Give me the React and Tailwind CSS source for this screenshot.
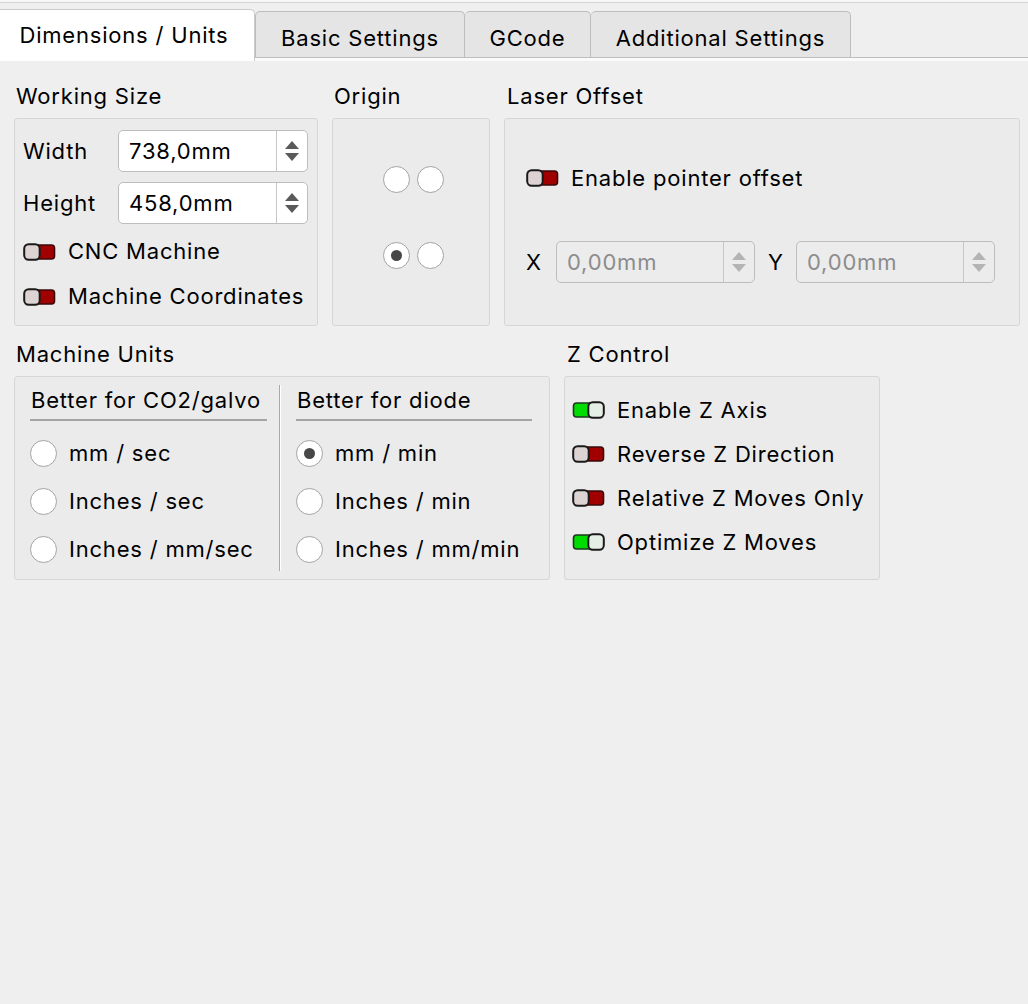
import React from "react";

function Toggle({ on }) {
  if (on) {
    return (
      <svg width="33" height="18" viewBox="0 0 33 18" className="shrink-0">
        <rect x="1.5" y="2" width="20" height="14" rx="3" fill="#00dc00" stroke="#1d3a1d" strokeWidth="1.6" />
        <rect x="16.3" y="1.2" width="15.5" height="15.6" rx="4.5" fill="#e6efe6" stroke="#1a1a1a" strokeWidth="2" />
      </svg>
    );
  }
  return (
    <svg width="33" height="18" viewBox="0 0 33 18" className="shrink-0">
      <rect x="11.5" y="2" width="20" height="14" rx="3" fill="#a00000" stroke="#3a0a0a" strokeWidth="1.6" />
      <rect x="1.2" y="1.2" width="15.5" height="15.6" rx="4.5" fill="#ddd3d3" stroke="#1a1a1a" strokeWidth="2" />
    </svg>
  );
}

function Radio({ checked }) {
  return (
    <div className="w-[27px] h-[27px] rounded-full bg-white border-[1.5px] border-[#a3a3a3] flex items-center justify-center shrink-0">
      {checked && <div className="w-[11px] h-[11px] rounded-full bg-[#474747]" />}
    </div>
  );
}

function Spin({ value, disabled, w }) {
  const arrow = disabled ? "#b4b4b4" : "#5a5a5a";
  return (
    <div
      className={
        "flex h-[42px] rounded-[5px] border border-[#bdbdbd] overflow-hidden shrink-0 " +
        (disabled ? "bg-[#ececec]" : "bg-white")
      }
      style={{ width: w }}
    >
      <div
        className={
          "flex-1 flex items-center pl-[10px] " +
          (disabled ? "text-[#8c8c8c]" : "text-black")
        }
      >
        {value}
      </div>
      <div className="w-[31px] border-l border-[#c6c6c6] flex flex-col items-center justify-center gap-[4px]">
        <svg width="14" height="8" viewBox="0 0 14 8">
          <polygon points="7,0 14,8 0,8" fill={arrow} />
        </svg>
        <svg width="14" height="8" viewBox="0 0 14 8">
          <polygon points="0,0 14,0 7,8" fill={arrow} />
        </svg>
      </div>
    </div>
  );
}

function Box({ children, className }) {
  return (
    <div className={"bg-[#ebebeb] border border-[#d6d6d6] rounded-[3px] " + className}>
      {children}
    </div>
  );
}

function Title({ children, className }) {
  return <div className={"h-[28px] leading-[28px] " + (className || "")}>{children}</div>;
}

function RadioRow({ checked, children }) {
  return (
    <div className="flex items-center gap-[12px] h-[27px] leading-[27px]">
      <Radio checked={checked} />
      <span>{children}</span>
    </div>
  );
}

function ToggleRow({ on, children, h }) {
  return (
    <div className={"flex items-center gap-[12px] " + h}>
      <Toggle on={on} />
      <span>{children}</span>
    </div>
  );
}

export default function App() {
  return (
    <div className="w-[1028px] h-[1004px] bg-[#efefef] overflow-hidden text-[22px] tracking-[0.8px] text-black font-['Inter','Liberation_Sans',sans-serif]">
      <div className="h-[2px] bg-[#f7f7f7]" />
      <div className="h-px bg-[#d2d2d2]" />
      {/* Tabs */}
      <div className="flex items-end h-[55px] border-b border-[#bdbdbd]">
        <div className="relative z-10 w-[255px] h-[52px] mb-[-4px] bg-white border-t border-r border-[#cbcbcb] rounded-tr-[5px] flex items-start justify-center pt-[9px] pr-[6px]">
          Dimensions / Units
        </div>
        <div className="w-[210px] h-[46px] bg-[#e5e5e5] border border-b-0 border-[#bdbdbd] rounded-t-[5px] flex items-center justify-center pt-[7px]">
          Basic Settings
        </div>
        <div className="w-[126px] h-[46px] bg-[#e5e5e5] border border-b-0 border-l-0 border-[#bdbdbd] rounded-t-[5px] flex items-center justify-center pt-[7px]">
          GCode
        </div>
        <div className="w-[260px] h-[46px] bg-[#e5e5e5] border border-b-0 border-l-0 border-[#bdbdbd] rounded-t-[5px] flex items-center justify-center pt-[7px]">
          Additional Settings
        </div>
      </div>
      <div className="h-[3px] bg-[#fafafa]" />

      <div className="pl-[14px] pr-[8px] pt-[21px]">
        {/* Row 1 */}
        <div className="flex gap-[14px]">
          <div className="w-[304px] shrink-0">
            <Title className="pl-[2px]">Working Size</Title>
            <Box className="mt-[8px] h-[208px] pt-[11px] pl-[8px]">
              <div className="flex items-center h-[42px]">
                <div className="w-[95px]">Width</div>
                <Spin value="738,0mm" w={190} />
              </div>
              <div className="flex items-center h-[42px] mt-[10px]">
                <div className="w-[95px]">Height</div>
                <Spin value="458,0mm" w={190} />
              </div>
              <div className="mt-[5px]">
                <ToggleRow h="h-[45px]">CNC Machine</ToggleRow>
                <ToggleRow h="h-[45px]">Machine Coordinates</ToggleRow>
              </div>
            </Box>
          </div>

          <div className="w-[158px] shrink-0">
            <Title className="pl-[2px]">Origin</Title>
            <Box className="mt-[8px] h-[208px] pt-[47px] flex flex-col items-center">
              <div className="flex gap-[7px] pl-[4px]">
                <Radio />
                <Radio />
              </div>
              <div className="flex gap-[7px] pl-[4px] mt-[49px]">
                <Radio checked />
                <Radio />
              </div>
            </Box>
          </div>

          <div className="w-[516px] shrink-0">
            <Title className="pl-[3px]">Laser Offset</Title>
            <Box className="mt-[8px] h-[208px] pl-[21px] pt-[45px]">
              <ToggleRow h="h-[28px]">Enable pointer offset</ToggleRow>
              <div className="flex items-center mt-[49px]">
                <span className="w-[30px]">X</span>
                <Spin value="0,00mm" disabled w={199} />
                <span className="ml-[13px] w-[28px]">Y</span>
                <Spin value="0,00mm" disabled w={199} />
              </div>
            </Box>
          </div>
        </div>

        {/* Row 2 */}
        <div className="flex gap-[14px] mt-[14px]">
          <div className="w-[536px] shrink-0">
            <Title className="pl-[2px]">Machine Units</Title>
            <Box className="mt-[8px] h-[204px] flex pt-[8px] pl-[15px]">
              <div className="w-[237px]">
                <div className="h-[30px] leading-[30px] pl-[1px]">Better for CO2/galvo</div>
                <div className="h-[2px] bg-[#a5a5a5] mt-[4px]" />
                <div className="flex flex-col gap-[21px] mt-[19px]">
                  <RadioRow>mm / sec</RadioRow>
                  <RadioRow>Inches / sec</RadioRow>
                  <RadioRow>Inches / mm/sec</RadioRow>
                </div>
              </div>
              <div className="w-[2px] h-[186px] bg-[#a8a8a8] ml-[12px] border-r border-white" />
              <div className="w-[236px] ml-[15px]">
                <div className="h-[30px] leading-[30px] pl-[1px]">Better for diode</div>
                <div className="h-[2px] bg-[#a5a5a5] mt-[4px]" />
                <div className="flex flex-col gap-[21px] mt-[19px]">
                  <RadioRow checked>mm / min</RadioRow>
                  <RadioRow>Inches / min</RadioRow>
                  <RadioRow>Inches / mm/min</RadioRow>
                </div>
              </div>
            </Box>
          </div>

          <div className="w-[316px] shrink-0">
            <Title className="pl-[3px]">Z Control</Title>
            <Box className="mt-[8px] h-[204px] pl-[7px] pt-[11px]">
              <ToggleRow on h="h-[44px]">Enable Z Axis</ToggleRow>
              <ToggleRow h="h-[44px]">Reverse Z Direction</ToggleRow>
              <ToggleRow h="h-[44px]">Relative Z Moves Only</ToggleRow>
              <ToggleRow on h="h-[44px]">Optimize Z Moves</ToggleRow>
            </Box>
          </div>
        </div>
      </div>
    </div>
  );
}
